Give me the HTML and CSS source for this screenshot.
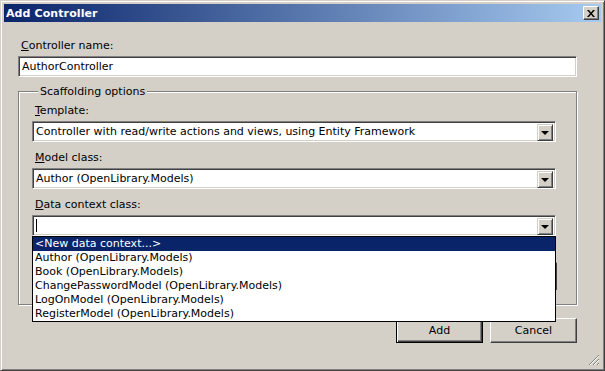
FILE: index.html
```html
<!DOCTYPE html>
<html lang="en">
<head>
    <meta charset="UTF-8">
    <title>Add Controller</title>
    <link rel="stylesheet" href="styles.css">
</head>
<body>
    <div class="window">
        <div class="titlebar">
            <span class="title">Add Controller</span>
            <button class="close" aria-label="Close">
                <svg width="8" height="7" viewBox="0 0 8 7">
                    <path d="M0 0h2l2 2.5L6 0h2L5 3.5 8 7H6L4 4.5 2 7H0l3-3.5z" fill="#000"/>
                </svg>
            </button>
        </div>

        <div class="content">
            <div class="label"><u>C</u>ontroller name:</div>
            <div class="field textbox">AuthorController</div>

            <fieldset class="group">
                <legend>Scaffolding options</legend>

                <div class="label"><u>T</u>emplate:</div>
                <div class="field combo">
                    <span class="combo-text">Controller with read/write actions and views, using Entity Framework</span>
                    <span class="arrow"></span>
                </div>

                <div class="label gap"><u>M</u>odel class:</div>
                <div class="field combo">
                    <span class="combo-text">Author (OpenLibrary.Models)</span>
                    <span class="arrow"></span>
                </div>

                <div class="label gap"><u>D</u>ata context class:</div>
                <div class="combo-wrap">
                    <div class="field combo">
                        <span class="combo-text"><span class="caret"></span></span>
                        <span class="arrow"></span>
                    </div>
                    <ul class="dropdown">
                        <li class="selected">&lt;New data context...&gt;</li>
                        <li>Author (OpenLibrary.Models)</li>
                        <li>Book (OpenLibrary.Models)</li>
                        <li>ChangePasswordModel (OpenLibrary.Models)</li>
                        <li>LogOnModel (OpenLibrary.Models)</li>
                        <li>RegisterModel (OpenLibrary.Models)</li>
                    </ul>
                </div>

                <div class="advanced-row">
                    <button class="btn advanced">Advanced Options...</button>
                </div>
            </fieldset>

            <div class="actions">
                <button class="btn default">Add</button>
                <button class="btn">Cancel</button>
            </div>
        </div>

        <svg class="grip" width="12" height="12" viewBox="0 0 12 12">
            <path d="M11 1L1 11M11 5L5 11M11 9L9 11" stroke="#808080" stroke-width="1"/>
            <path d="M11 2L2 11M11 6L6 11M11 10L10 11" stroke="#fff" stroke-width="1"/>
        </svg>
    </div>
</body>
</html>
```

FILE: styles.css
```css
* {
    box-sizing: border-box;
}

body {
    margin: 0;
    background-color: #d4d0c8;
    font-family: "DejaVu Sans", Verdana, sans-serif;
    font-size: 11px;
    color: #000;
}

.window {
    position: relative;
    width: 605px;
    height: 371px;
    padding: 3px;
    background-color: #d4d0c8;
    border: 1px solid;
    border-color: #d4d0c8 #404040 #404040 #d4d0c8;
    box-shadow: inset 1px 1px 0 #fff, inset -1px -1px 0 #808080;
}

.titlebar {
    display: flex;
    align-items: center;
    height: 18px;
    padding-left: 2px;
    background: linear-gradient(to right, #0a246a, #a6caf0);
}

.title {
    color: #fff;
    font-weight: bold;
    font-size: 11px;
    letter-spacing: 0.1px;
}

.close {
    display: flex;
    align-items: center;
    justify-content: center;
    margin-left: auto;
    margin-right: 2px;
    width: 16px;
    height: 14px;
    padding: 0;
    background-color: #d4d0c8;
    border: 1px solid;
    border-color: #fff #404040 #404040 #fff;
    box-shadow: inset -1px -1px 0 #808080;
}

.content {
    padding: 0 24px 0 14px;
}

.label {
    height: 13px;
    line-height: 13px;
    padding-left: 3px;
    white-space: nowrap;
}

.content > .label {
    margin-top: 17px;
}

.label.gap {
    margin-top: 9px;
}

.field {
    margin-top: 4px;
    height: 21px;
    background-color: #fff;
    border: 1px solid;
    border-color: #808080 #fff #fff #808080;
    box-shadow: inset 1px 1px 0 #404040, inset -1px -1px 0 #d4d0c8;
}

.textbox {
    padding: 0 3px;
    line-height: 19px;
}

.group {
    margin: 8px 0 0;
    padding: 6px 20px 14px 13px;
    border: 1px solid #808080;
    box-shadow: inset 1px 1px 0 #fff, 1px 1px 0 #fff;
}

.group legend {
    margin-left: 6px;
    padding: 0 2px;
    line-height: 13px;
    background-color: #d4d0c8;
}

.combo {
    display: flex;
    padding: 2px;
}

.combo-text {
    flex: 1;
    display: flex;
    align-items: center;
    padding-left: 1px;
    line-height: 17px;
    white-space: nowrap;
    overflow: hidden;
}

.caret {
    width: 1px;
    height: 13px;
    background-color: #000;
}

.arrow {
    position: relative;
    width: 16px;
    height: 17px;
    background-color: #d4d0c8;
    border: 1px solid;
    border-color: #d4d0c8 #404040 #404040 #d4d0c8;
    box-shadow: inset 1px 1px 0 #fff, inset -1px -1px 0 #808080;
}

.arrow::after {
    content: "";
    position: absolute;
    left: 3px;
    top: 6px;
    border-left: 4px solid transparent;
    border-right: 4px solid transparent;
    border-top: 4px solid #000;
}

.combo-wrap {
    position: relative;
}

.dropdown {
    position: absolute;
    top: 100%;
    left: 0;
    right: 0;
    z-index: 2;
    margin: 0;
    padding: 0;
    list-style: none;
    background-color: #fff;
    border: 1px solid #000;
}

.dropdown li {
    height: 14px;
    line-height: 14px;
    padding-left: 2px;
    white-space: nowrap;
}

.dropdown li.selected {
    background-color: #0a246a;
    color: #fff;
}

.advanced-row {
    display: flex;
    justify-content: flex-end;
    margin-top: 26px;
    margin-right: -1px;
}

.btn {
    width: 87px;
    height: 25px;
    padding: 0;
    font-family: "DejaVu Sans", Verdana, sans-serif;
    font-size: 11px;
    color: #000;
    background-color: #d4d0c8;
    border: 1px solid;
    border-color: #fff #404040 #404040 #fff;
    box-shadow: inset -1px -1px 0 #808080;
}

.btn.advanced {
    width: 110px;
    height: 28px;
}

.btn.default {
    border: 1px solid #000;
    box-shadow: inset 1px 1px 0 #fff, inset -1px -1px 0 #404040, inset -2px -2px 0 #808080;
}

.actions {
    display: flex;
    justify-content: flex-end;
    gap: 7px;
    margin-top: 13px;
}

.grip {
    position: absolute;
    right: 4px;
    bottom: 4px;
}
```
